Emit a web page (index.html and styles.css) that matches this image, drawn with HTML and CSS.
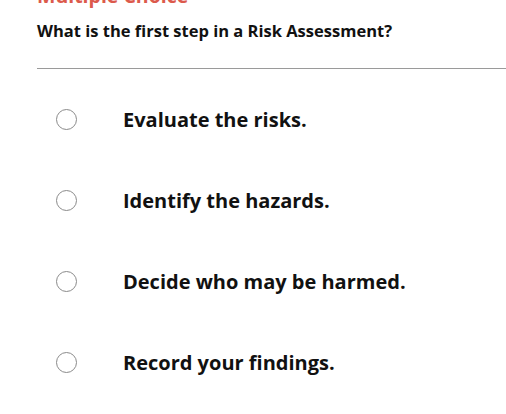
FILE: index.html
```html
<!DOCTYPE html>
<html>
<head>
<meta charset="utf-8">
<link rel="stylesheet" href="styles.css">
</head>
<body>
<div class="page">
  <h2 class="heading">Multiple Choice</h2>
  <p class="question">What is the first step in a Risk Assessment?</p>
  <hr class="divider">
  <ul class="options">
    <li class="option"><span class="radio"></span><span class="label">Evaluate the risks.</span></li>
    <li class="option"><span class="radio"></span><span class="label">Identify the hazards.</span></li>
    <li class="option"><span class="radio"></span><span class="label">Decide who may be harmed.</span></li>
    <li class="option"><span class="radio"></span><span class="label">Record your findings.</span></li>
  </ul>
</div>
</body>
</html>
```
FILE: styles.css
```css
html, body {
  margin: 0;
  padding: 0;
  background: #fff;
}
body {
  font-family: "Open Sans", "Noto Sans", sans-serif;
  color: #111;
}
.page {
  padding-left: 37px;
  margin-top: -21px;
}
.heading {
  margin: 5px 0 0 0;
  font-size: 19.5px;
  line-height: 24px;
  font-weight: 700;
  color: #dc5a4c;
}
.question {
  margin: 12px 0 0 0;
  font-size: 16.5px;
  line-height: 22px;
  font-weight: 700;
}
.divider {
  margin: 26px 0 0 0;
  border: 0;
  border-top: 1px solid #9a9a9a;
  height: 0;
}
.options {
  list-style: none;
  margin: 0;
  padding: 0;
}
.option {
  display: flex;
  align-items: center;
  height: 81px;
}
.option:first-child {
  margin-top: 10px;
}
.radio {
  box-sizing: border-box;
  width: 21px;
  height: 21px;
  border: 1px solid #8a8a8a;
  border-radius: 50%;
  margin-left: 19px;
  flex-shrink: 0;
}
.label {
  margin-left: 46px;
  font-size: 20px;
  font-weight: 700;
}
```
